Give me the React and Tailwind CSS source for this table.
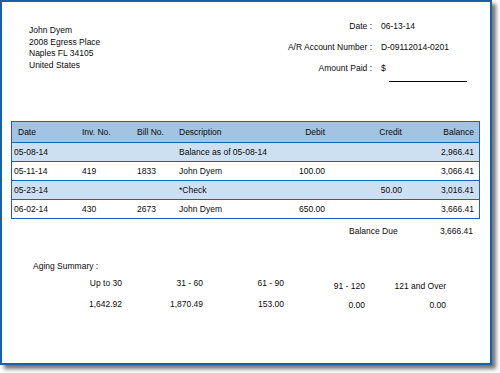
import React from "react";

const rows = [
  { date: "05-08-14", inv: "", bill: "", desc: "Balance as of 05-08-14", debit: "", credit: "", bal: "2,966.41", alt: true },
  { date: "05-11-14", inv: "419", bill: "1833", desc: "John Dyem", debit: "100.00", credit: "", bal: "3,066.41", alt: false },
  { date: "05-23-14", inv: "", bill: "", desc: "*Check", debit: "", credit: "50.00", bal: "3,016.41", alt: true },
  { date: "06-02-14", inv: "430", bill: "2673", desc: "John Dyem", debit: "650.00", credit: "", bal: "3,666.41", alt: false },
];

const cols = "grid grid-cols-[70px_55px_42px_101px_47px_77px_74px]";

export default function App() {
  return (
    <div className="w-[500px] h-[373px] bg-white text-[8.5px] text-[#0a0a0a] font-['Liberation_Sans',Arial,sans-serif]">
      <div className="w-[492px] h-[365px] bg-white border-2 border-[#1660ae] shadow-[4px_4px_4px_rgba(0,0,0,0.55)] flex flex-col">
        {/* top section */}
        <div className="h-[119px] flex">
          <div className="pl-[27px] pt-[23px] leading-[11.5px]">
            <div>John Dyem</div>
            <div>2008 Egress Place</div>
            <div>Naples FL 34105</div>
            <div>United States</div>
          </div>
          <div className="ml-auto mr-[23px] pt-[14px] flex flex-col">
            <div className="flex h-[21px] items-center">
              <div className="w-[90px] text-right">Date :</div>
              <div className="ml-[9px]">06-13-14</div>
            </div>
            <div className="flex h-[21px] items-center">
              <div className="w-[90px] text-right">A/R Account Number :</div>
              <div className="ml-[9px]">D-09112014-0201</div>
            </div>
            <div className="flex h-[21px] items-center">
              <div className="w-[90px] text-right">Amount Paid :</div>
              <div className="ml-[9px]">$</div>
            </div>
            <div className="ml-[107px] mt-[2px] w-[78px] h-px bg-black"></div>
          </div>
        </div>

        {/* table */}
        <div className="ml-[9px] w-[469px] border border-[#1d62ad]">
          <div className={`${cols} h-[20px] items-center bg-[#a2c3e2]`}>
            <div className="pl-[6px]">Date</div>
            <div>Inv. No.</div>
            <div>Bill No.</div>
            <div>Description</div>
            <div className="text-right pr-[2px]">Debit</div>
            <div className="text-right pr-[2px]">Credit</div>
            <div className="text-right pr-[4px]">Balance</div>
          </div>
          {rows.map((r, i) => (
            <div
              key={i}
              className={`${cols} h-[19px] items-center border-t border-[#1d62ad] ${r.alt ? "bg-[#cde0f1]" : "bg-white"}`}
            >
              <div className="pl-[2px]">{r.date}</div>
              <div>{r.inv}</div>
              <div>{r.bill}</div>
              <div className="whitespace-nowrap">{r.desc}</div>
              <div className="text-right pr-[2px]">{r.debit}</div>
              <div className="text-right pr-[2px]">{r.credit}</div>
              <div className="text-right pr-[4px]">{r.bal}</div>
            </div>
          ))}
        </div>

        {/* balance due */}
        <div className="flex h-[14px] items-center mt-[5px] pl-[347px] pr-[17px]">
          <div>Balance Due</div>
          <div className="ml-auto">3,666.41</div>
        </div>

        {/* aging summary */}
        <div className="pl-[31px] mt-[22px] leading-[12px]">Aging Summary :</div>
        <div className="pl-[39px] mt-[5px] grid grid-cols-[81px_81px_81px_81px_81px] leading-[12px]">
          <div className="text-right">Up to 30</div>
          <div className="text-right">31 - 60</div>
          <div className="text-right">61 - 90</div>
          <div className="text-right mt-[3px]">91 - 120</div>
          <div className="text-right mt-[3px]">121 and Over</div>
        </div>
        <div className="pl-[39px] mt-[6px] grid grid-cols-[81px_81px_81px_81px_81px] leading-[12px]">
          <div className="text-right">1,642.92</div>
          <div className="text-right">1,870.49</div>
          <div className="text-right">153.00</div>
          <div className="text-right mt-[1px]">0.00</div>
          <div className="text-right mt-[1px]">0.00</div>
        </div>
      </div>
    </div>
  );
}
